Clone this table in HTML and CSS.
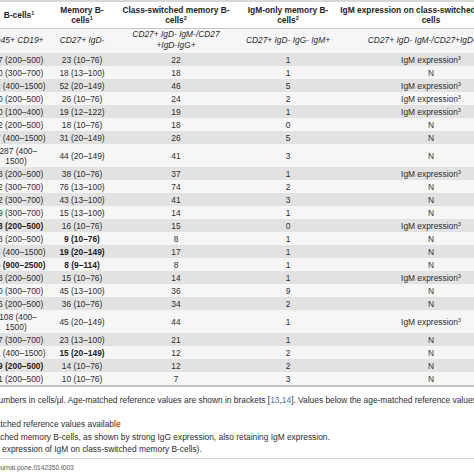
FILE: index.html
```html
<!DOCTYPE html>
<html>
<head>
<meta charset="utf-8">
<link rel="stylesheet" href="styles.css">
</head>
<body>
<div class="viewport">
<div class="doc">
<table class="tbl">
<colgroup><col class="w1"><col class="w2"><col class="w3"><col class="w4"><col class="w5"></colgroup>
<thead>
<tr class="hd"><th class="h1">B-cells<sup>1</sup></th><th>Memory B-<br>cells<sup>1</sup></th><th>Class-switched memory B-<br>cells<sup>2</sup></th><th>IgM-only memory B-<br>cells<sup>2</sup></th><th class="c5">IgM expression on class-switched memory B-<br>cells</th></tr>
<tr class="sub"><td><i>CD45+ CD19+</i></td><td><i>CD27+ IgD-</i></td><td><i>CD27+ IgD- IgM-/CD27<br>+IgD-IgG+</i></td><td><i>CD27+ IgD- IgG- IgM+</i></td><td class="c5"><i>CD27+ IgD- IgM-/CD27+IgD-IgG+</i></td></tr>
</thead>
<tbody>
<tr class="g"><td>247 (200–500)</td><td>23 (10–76)</td><td>22</td><td>1</td><td class="c5">IgM expression<sup>3</sup></td></tr>
<tr class="w"><td>420 (300–700)</td><td>18 (13–100)</td><td>18</td><td>1</td><td class="c5">N</td></tr>
<tr class="g"><td>612 (400–1500)</td><td>52 (20–149)</td><td>46</td><td>5</td><td class="c5">IgM expression<sup>3</sup></td></tr>
<tr class="w"><td>310 (200–500)</td><td>26 (10–76)</td><td>24</td><td>2</td><td class="c5">IgM expression<sup>3</sup></td></tr>
<tr class="g"><td>210 (100–400)</td><td>19 (12–122)</td><td>19</td><td>1</td><td class="c5">IgM expression<sup>3</sup></td></tr>
<tr class="w"><td>232 (200–500)</td><td>18 (10–76)</td><td>18</td><td>0</td><td class="c5">N</td></tr>
<tr class="g"><td>587 (400–1500)</td><td>31 (20–149)</td><td>26</td><td>5</td><td class="c5">N</td></tr>
<tr class="w"><td>1287 (400–<br>1500)</td><td>44 (20–149)</td><td>41</td><td>3</td><td class="c5">N</td></tr>
<tr class="g"><td>298 (200–500)</td><td>38 (10–76)</td><td>37</td><td>1</td><td class="c5">IgM expression<sup>3</sup></td></tr>
<tr class="w"><td>512 (300–700)</td><td>76 (13–100)</td><td>74</td><td>2</td><td class="c5">N</td></tr>
<tr class="g"><td>372 (300–700)</td><td>43 (13–100)</td><td>41</td><td>3</td><td class="c5">N</td></tr>
<tr class="w"><td>429 (300–700)</td><td>15 (13–100)</td><td>14</td><td>1</td><td class="c5">N</td></tr>
<tr class="g"><td><b>158 (200–500)</b></td><td>16 (10–76)</td><td>15</td><td>0</td><td class="c5">IgM expression<sup>3</sup></td></tr>
<tr class="w"><td>248 (200–500)</td><td><b>9 (10–76)</b></td><td>8</td><td>1</td><td class="c5">N</td></tr>
<tr class="g"><td>493 (400–1500)</td><td><b>19 (20–149)</b></td><td>17</td><td>1</td><td class="c5">N</td></tr>
<tr class="w"><td><b>615 (900–2500)</b></td><td><b>8 (9–114)</b></td><td>8</td><td>1</td><td class="c5">N</td></tr>
<tr class="g"><td>318 (200–500)</td><td>15 (10–76)</td><td>14</td><td>1</td><td class="c5">IgM expression<sup>3</sup></td></tr>
<tr class="w"><td>550 (300–700)</td><td>45 (13–100)</td><td>36</td><td>9</td><td class="c5">N</td></tr>
<tr class="g"><td>356 (200–500)</td><td>36 (10–76)</td><td>34</td><td>2</td><td class="c5">N</td></tr>
<tr class="w"><td>1108 (400–<br>1500)</td><td>45 (20–149)</td><td>44</td><td>1</td><td class="c5">IgM expression<sup>3</sup></td></tr>
<tr class="g"><td>457 (300–700)</td><td>23 (13–100)</td><td>21</td><td>1</td><td class="c5">N</td></tr>
<tr class="w"><td>681 (400–1500)</td><td><b>15 (20–149)</b></td><td>12</td><td>2</td><td class="c5">N</td></tr>
<tr class="g"><td><b>139 (200–500)</b></td><td>14 (10–76)</td><td>12</td><td>2</td><td class="c5">N</td></tr>
<tr class="w last"><td>271 (200–500)</td><td>10 (10–76)</td><td>7</td><td>3</td><td class="c5">N</td></tr>
</tbody>
</table>
<div class="notes">
<p>Absolute numbers in cells/μl. Age-matched reference values are shown in brackets [<span class="ref">13</span>,<span class="ref">14</span>]. Values below the age-matched reference values<br>are bold.</p>
<p>No age-matched reference values available</p>
<p><sup>3</sup>Class-switched memory B-cells, as shown by strong IgG expression, also retaining IgM expression.</p>
<p>N = No (no expression of IgM on class-switched memory B-cells).</p>
</div>
<div class="rule"></div>
<div class="doi">doi:10.1371/journal.pone.0142350.t003</div>
</div>
</div>
</body>
</html>
```
FILE: styles.css
```css
html, body {
  margin: 0;
  padding: 0;
  background: #ffffff;
}
body {
  font-family: "Liberation Sans", Arial, sans-serif;
  font-size: 8.4px;
  color: #2e2e2e;
}
.viewport {
  width: 474px;
  height: 474px;
  overflow: hidden;
}
.doc {
  margin-left: -41px;
  width: 640px;
}
.tbl {
  margin-left: 21px;
  border-collapse: separate;
  border-spacing: 0;
  table-layout: fixed;
  width: 546px;
}
.w1 { width: 72px; }
.w2 { width: 60px; }
.w3 { width: 128px; }
.w4 { width: 96px; }
.w5 { width: 190px; }
.tbl th, .tbl td {
  padding: 1.5px 5px;
  line-height: 10px;
  text-align: center;
  white-space: nowrap;
  font-weight: normal;
}
.tbl .c5 {
  padding-left: 2px;
  padding-right: 2px;
}
.hd th {
  font-weight: bold;
  color: #1e1e1e;
  background: #ffffff;
  padding-top: 3px;
  padding-bottom: 3px;
  border-top: 2px solid #d8d8d8;
  border-bottom: 1px solid #c6c6c6;
}
.hd th.h1 {
  padding-left: 8px;
  padding-right: 2px;
}
.sub td {
  background: #f6f6f6;
  line-height: 11px;
  padding-top: 0;
  padding-bottom: 2px;
  color: #2a2a2a;
}
tr.g td { background: #e2e2e2; }
tr.w td { background: #f6f6f6; }
tr.last td { border-bottom: 2px solid #c4c4c4; }
b { font-weight: bold; color: #1e1e1e; }
sup {
  font-size: 5.5px;
  line-height: 0;
  vertical-align: 3px;
}
.notes {
  margin-top: 7px;
  line-height: 12.2px;
  color: #2e2e2e;
}
.notes p { margin: 0; }
.ref { color: #4a6fb0; }
.rule {
  margin-top: 3px;
  border-top: 1px solid #d0d0d0;
}
.doi {
  margin-top: 4px;
  font-size: 6.6px;
  line-height: 9px;
  color: #555555;
}
```
